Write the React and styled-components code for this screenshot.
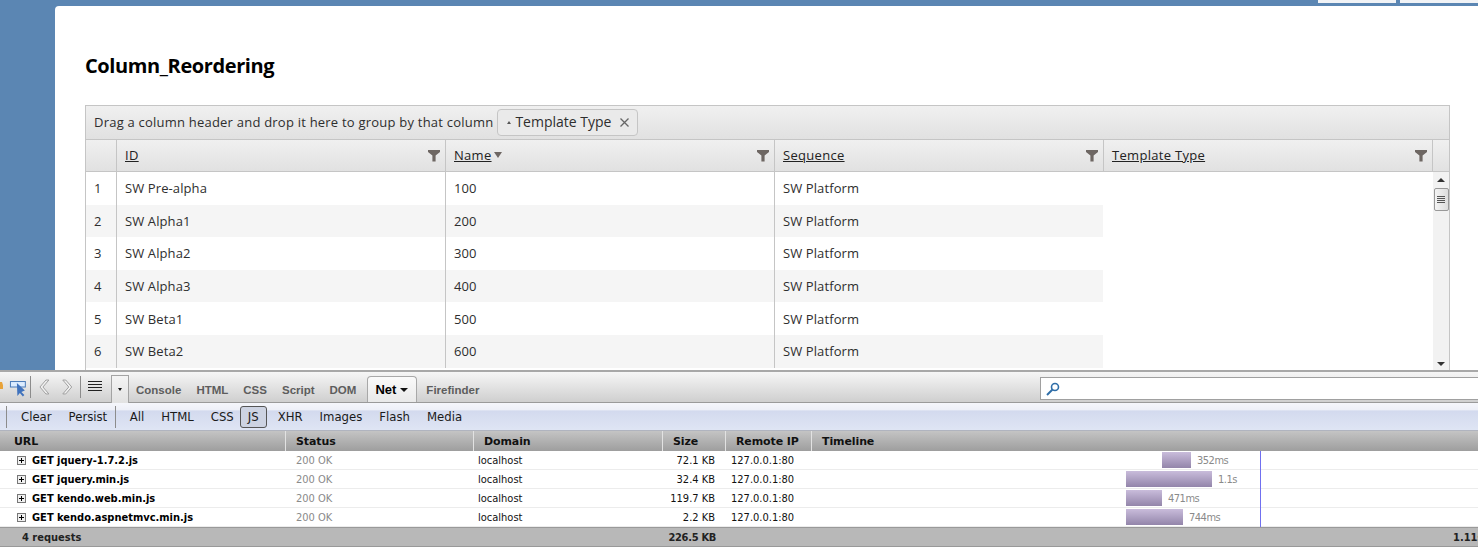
import React from "react";
import styled, { createGlobalStyle } from "styled-components";

const GRID_COLUMNS = "31px 329px 329px 329px 329px 1fr";
const NET_COLUMNS = "286px 188px 189px 63px 86px 1fr";

const requests = [
  { url: "GET jquery-1.7.2.js", size: "72.1 KB", offset: 36, width: 29, time: "352ms" },
  { url: "GET jquery.min.js", size: "32.4 KB", offset: 0, width: 86, time: "1.1s" },
  { url: "GET kendo.web.min.js", size: "119.7 KB", offset: 0, width: 36, time: "471ms" },
  { url: "GET kendo.aspnetmvc.min.js", size: "2.2 KB", offset: 0, width: 57, time: "744ms" },
];

const rows = [
  ["1", "SW Pre-alpha", "100"],
  ["2", "SW Alpha1", "200"],
  ["3", "SW Alpha2", "300"],
  ["4", "SW Alpha3", "400"],
  ["5", "SW Beta1", "500"],
  ["6", "SW Beta2", "600"],
];

const GlobalStyle = createGlobalStyle`
  html, body {
    margin: 0;
    padding: 0;
    background: #fff;
  }
`;

const Page = styled.div`
  width: 1478px;
  height: 558px;
  overflow: hidden;
  display: flex;
  flex-direction: column;
`;

const Site = styled.div`
  height: 370px;
  flex: none;
  display: flex;
  background: #5b86b3;
  position: relative;
`;

const TopTabs = styled.div`
  position: absolute;
  top: 0;
  right: 0;
  display: flex;
  gap: 4px;
`;

const TopTab = styled.div`
  width: 78px;
  height: 3px;
  background: #f1f3f6;
`;

const Content = styled.div`
  margin: 6px 0 0 55px;
  flex: 1;
  min-width: 0;
  background: #fff;
  border-top-left-radius: 4px;
  padding: 0 28px 0 30px;
  overflow: hidden;
`;

const Title = styled.h1`
  margin: 47px 0 26px;
  height: 26px;
  font: bold 20px/26px "Open Sans", sans-serif;
  letter-spacing: -0.4px;
  color: #000;
`;

const Grid = styled.div`
  border: 1px solid #c5c5c5;
  border-bottom: none;
  font: 13px/18px "Open Sans", sans-serif;
  letter-spacing: 0.1px;
  color: #2e2e2e;
`;

const GroupBar = styled.div`
  height: 34px;
  display: flex;
  align-items: center;
  padding: 0 0 1px 8px;
  box-sizing: border-box;
  background: linear-gradient(#f0f0f0, #e1e1e1);
  border-bottom: 1px solid #c5c5c5;
  letter-spacing: 0.22px;
`;

const GroupChip = styled.div`
  height: 25px;
  margin-left: 4px;
  padding: 0 8px 0 7px;
  display: flex;
  align-items: center;
  border: 1px solid #c5c5c5;
  border-radius: 4px;
  background: #eaeaea;
  font-size: 14px;
  letter-spacing: 0;
`;

const ChipCaret = styled.span`
  width: 0;
  height: 0;
  margin: 0 4px 0 2px;
  border-left: 2.5px solid transparent;
  border-right: 2.5px solid transparent;
  border-bottom: 3px solid #555;
`;

const ChipClose = styled.svg`
  margin-left: 9px;
`;

const HeaderRow = styled.div`
  display: grid;
  grid-template-columns: ${GRID_COLUMNS};
  height: 32px;
  box-sizing: border-box;
  background: linear-gradient(#f0f0f0, #e1e1e1);
  border-bottom: 1px solid #c5c5c5;
`;

const HeaderCell = styled.div`
  display: flex;
  align-items: center;
  padding: 0 5px 1px 8px;
  border-right: ${(p) => (p.$last ? "none" : "1px solid #c5c5c5")};
  letter-spacing: 0.3px;
  a {
    color: #222;
    text-decoration: underline;
  }
`;

const SortArrow = styled.span`
  width: 0;
  height: 0;
  margin-left: 2px;
  border: 4px solid transparent;
  border-top: 6px solid #6e6763;
  border-bottom: none;
`;

const FilterIcon = styled.svg`
  margin-left: auto;
  flex: none;
`;

const Body = styled.div`
  position: relative;
  height: 198px;
`;

const Row = styled.div`
  display: grid;
  grid-template-columns: 31px 329px 329px 328px;
  width: 1017px;
  height: 32.6px;
  align-items: stretch;
  background: ${(p) => (p.$alt ? "#f5f5f5" : "#fff")};
`;

const Cell = styled.div`
  display: flex;
  align-items: center;
  padding-left: 8px;
  border-right: ${(p) => (p.$last ? "none" : "1px solid #c5c5c5")};
`;

const ScrollTrack = styled.div`
  position: absolute;
  top: 0;
  right: 0;
  bottom: 0;
  width: 16px;
  box-sizing: border-box;
  padding-bottom: 4px;
  background: #f2f2f2;
  display: flex;
  flex-direction: column;
  align-items: center;
`;

const ScrollUp = styled.span`
  margin-top: 6px;
  width: 0;
  height: 0;
  border-left: 4px solid transparent;
  border-right: 4px solid transparent;
  border-bottom: 4px solid #333;
`;

const ScrollDown = styled.span`
  margin-top: auto;
  width: 0;
  height: 0;
  border-left: 4px solid transparent;
  border-right: 4px solid transparent;
  border-top: 4px solid #333;
`;

const ScrollThumb = styled.div`
  margin-top: 6px;
  width: 13px;
  height: 21px;
  border: 1px solid #999;
  border-radius: 2px;
  background: linear-gradient(90deg, #f4f4f4, #ddd);
  display: flex;
  align-items: center;
  justify-content: center;
`;

const Firebug = styled.div`
  flex: 1;
  display: flex;
  flex-direction: column;
  font-family: "DejaVu Sans", sans-serif;
  border-top: 2px solid #a8a8a8;
  position: relative;
`;

const Toolbar = styled.div`
  height: 30px;
  display: flex;
  align-items: flex-end;
  background: linear-gradient(#f6f6f6, #cfcfcf);
  border-bottom: 1px solid #9a9a9a;
`;

const ToolIcons = styled.div`
  display: flex;
  align-items: center;
  height: 30px;
  width: 128.5px;
  flex: none;
`;

const Divider = styled.span`
  width: 1px;
  height: 22px;
  background: #8c8c8c;
  flex: none;
`;

const NetDivider = styled(Divider)`
  margin-right: 5.5px;
  & ~ & {
    margin-left: -1px;
  }
`;

const ListIcon = styled.svg`
  flex: none;
  margin-left: 7px;
`;

const MenuButton = styled.span`
  width: 16px;
  height: 27px;
  margin: 3px 0 0 9px;
  border: 1px solid #a3a3a3;
  border-bottom: none;
  background: linear-gradient(#f4f4f4, #e2e2e2);
  display: flex;
  align-items: center;
  justify-content: center;
  flex: none;
`;

const Caret = styled.span`
  width: 0;
  height: 0;
  margin-left: ${(p) => (p.$gap ? "4px" : "0")};
  border-left: ${(p) => (p.$big ? 4 : 2.5)}px solid transparent;
  border-right: ${(p) => (p.$big ? 4 : 2.5)}px solid transparent;
  border-top: ${(p) => (p.$big ? 4 : 3)}px solid #111;
`;

const Tab = styled.div`
  height: 26px;
  box-sizing: border-box;
  display: flex;
  align-items: center;
  padding: ${(p) => (p.$active ? "0 8px 0 7px" : "0 6.5px")};
  margin: ${(p) => (p.$active ? "0 1.5px 0 3.5px" : "0")};
  font-family: "Liberation Sans", sans-serif;
  font-size: ${(p) => (p.$active ? 13 : 11.5)}px;
  font-weight: bold;
  color: ${(p) => (p.$active ? "#000" : "#5d5d5d")};
  border: 1px solid ${(p) => (p.$active ? "#a8a8a8" : "transparent")};
  border-bottom: none;
  border-radius: 4px 4px 0 0;
  background: ${(p) => (p.$active ? "linear-gradient(#fafafa, #e9e9e9)" : "none")};
`;

const SearchBox = styled.div`
  position: absolute;
  top: 5px;
  left: 1040px;
  right: -2px;
  height: 21px;
  border: 1px solid #a0a0a0;
  background: #fff;
  display: flex;
  align-items: center;
  padding-left: 5px;
`;

const NetBar = styled.div`
  height: 27px;
  display: flex;
  align-items: center;
  padding-left: 6px;
  font-family: "DejaVu Sans Condensed", "DejaVu Sans", sans-serif;
  font-size: 13px;
  color: #1a1a1a;
  background: linear-gradient(#f5f6fb 0, #eef0f8 24%, #d3daee 30%, #dfe5f4 100%);
  border-bottom: 1px solid #b0b4bf;
`;

const NetButton = styled.span`
  height: 22px;
  box-sizing: border-box;
  display: flex;
  align-items: center;
  padding: 0 ${(p) => (p.$active ? 7 : 6.5)}px;
  margin: ${(p) => (p.$active ? "0 2.5px 0 -2.5px" : "0 1px")};
  border: 1px solid ${(p) => (p.$active ? "#555" : "transparent")};
  border-radius: 3px;
  background: ${(p) => (p.$active ? "#cdd3e2" : "none")};
`;

const NetHead = styled.div`
  display: grid;
  grid-template-columns: ${NET_COLUMNS};
  height: 20px;
  background: linear-gradient(#c4c4c4, #9e9e9e);
`;

const NetHeadCell = styled.div`
  display: flex;
  align-items: center;
  padding-left: ${(p) => p.$pad || 10}px;
  font-size: 11px;
  font-weight: bold;
  letter-spacing: -0.1px;
  color: #111;
  border-right: ${(p) => (p.$last ? "none" : "1px solid #e2e2e2")};
`;

const NetRow = styled.div`
  display: grid;
  grid-template-columns: ${NET_COLUMNS};
  height: 19px;
  box-sizing: border-box;
  align-items: center;
  font-family: "DejaVu Sans Condensed", "DejaVu Sans", sans-serif;
  font-size: 11px;
  color: #111;
  border-bottom: 1px solid #ececec;
`;

const UrlCell = styled.div`
  display: flex;
  align-items: center;
  gap: 6px;
  padding-left: 17px;
  font-weight: bold;
  color: #000;
`;

const Expander = styled.span`
  width: 9px;
  height: 9px;
  box-sizing: border-box;
  border: 1px solid #777;
  background: linear-gradient(to right, transparent 3px, #000 3px, #000 4px, transparent 4px) center / 100% 5px no-repeat,
    linear-gradient(#000, #000) center / 5px 1px no-repeat, #f0f0f0;
`;

const StatusCell = styled.div`
  color: #8a8a8a;
  padding-left: 10px;
`;

const DomainCell = styled.div`
  padding-left: 4px;
`;

const SizeCell = styled.div`
  text-align: right;
  padding-right: 11px;
  margin-left: -30px;
`;

const IpCell = styled.div`
  padding-left: 5px;
`;

const TimeCell = styled.div`
  display: flex;
  align-items: center;
  height: 100%;
  padding-left: 314px;
`;

const Bar = styled.span`
  height: 16px;
  flex: none;
  background: linear-gradient(#c9bcdb, #9385aa);
`;

const BarLabel = styled.span`
  margin-left: 6px;
  letter-spacing: -0.5px;
  color: #8a8a8a;
`;

const RequestList = styled.div`
  position: relative;
`;

const LoadLine = styled.div`
  position: absolute;
  left: 1260px;
  top: 0;
  bottom: 0;
  width: 1px;
  background: #7070f0;
`;

const Summary = styled.div`
  display: grid;
  grid-template-columns: 286px 430px 1fr;
  height: 20px;
  box-sizing: border-box;
  align-items: center;
  background: #b8b8b8;
  border-top: 1px solid #999;
  border-bottom: 1px solid #999;
  font-family: "DejaVu Sans Condensed", "DejaVu Sans", sans-serif;
  font-size: 11px;
  font-weight: bold;
  color: #222;
`;

const SummaryCount = styled.div`
  padding-left: 22px;
`;

const SummarySize = styled.div`
  text-align: right;
  letter-spacing: -0.3px;
`;

const SummaryTime = styled.div`
  padding-left: 737px;
  white-space: nowrap;
`;

const Funnel = () => (
  <FilterIcon width="12" height="13" viewBox="0 0 12 13">
    <path d="M0 1h12v2L7.6 6.5V12.5H4.4V6.5L0 3z" fill="#6e6763" />
  </FilterIcon>
);

const App = () => {
  return (
    <Page>
      <GlobalStyle />
      <Site>
        <TopTabs>
          <TopTab />
          <TopTab />
        </TopTabs>
        <Content>
          <Title>Column_Reordering</Title>
          <Grid>
            <GroupBar>
              Drag a column header and drop it here to group by that column
              <GroupChip>
                <ChipCaret />
                Template Type
                <ChipClose width="9" height="9" viewBox="0 0 9 9">
                  <path d="M.5.5l8 8M8.5.5l-8 8" stroke="#666" strokeWidth="1.3" />
                </ChipClose>
              </GroupChip>
            </GroupBar>
            <HeaderRow>
              <HeaderCell />
              <HeaderCell>
                <a>ID</a>
                <Funnel />
              </HeaderCell>
              <HeaderCell>
                <a>Name</a>
                <SortArrow />
                <Funnel />
              </HeaderCell>
              <HeaderCell>
                <a>Sequence</a>
                <Funnel />
              </HeaderCell>
              <HeaderCell>
                <a>Template Type</a>
                <Funnel />
              </HeaderCell>
              <HeaderCell $last />
            </HeaderRow>
            <Body>
              {rows.map((row, i) => (
                <Row key={row[0]} $alt={i % 2 === 1}>
                  <Cell>{row[0]}</Cell>
                  <Cell>{row[1]}</Cell>
                  <Cell>{row[2]}</Cell>
                  <Cell $last>SW Platform</Cell>
                </Row>
              ))}
              <ScrollTrack>
                <ScrollUp />
                <ScrollThumb>
                  <svg width="8" height="7" viewBox="0 0 8 7">
                    <path d="M0 .5h8M0 2.5h8M0 4.5h8M0 6.5h8" stroke="#555" />
                  </svg>
                </ScrollThumb>
                <ScrollDown />
              </ScrollTrack>
            </Body>
          </Grid>
        </Content>
      </Site>
      <Firebug>
        <Toolbar>
          <ToolIcons>
            <svg width="30" height="30" viewBox="0 0 30 30">
              <path d="M0 10h2l1 3v4H0z" fill="#e8a33a" />
              <rect x="10.5" y="9.5" width="15" height="5.5" fill="#dcecff" stroke="#4a7ab8" />
              <path d="M17 11l.5 13 2.500-3 3 3.500 1.500-1.500-3-3 3.500-1.500z" fill="#3f72bd" />
            </svg>
            <Divider />
            <svg width="49" height="22" viewBox="0 0 49 22">
              <path
                d="M15 4L9 11l6 7h3l-6-7 6-7zM35 4l6 7-6 7h-3l6-7-6-7z"
                fill="#f0f0f0"
                stroke="#a0a0a0"
              />
            </svg>
            <Divider />
            <ListIcon width="14" height="22" viewBox="0 0 14 22">
              <path d="M0 5.5h14M0 8.5h14M0 11.5h14M0 14.5h14" stroke="#222" />
            </ListIcon>
            <MenuButton>
              <Caret />
            </MenuButton>
          </ToolIcons>
          <Tab>Console</Tab>
          <Tab>HTML</Tab>
          <Tab>CSS</Tab>
          <Tab>Script</Tab>
          <Tab>DOM</Tab>
          <Tab $active>
            Net
            <Caret $big $gap />
          </Tab>
          <Tab>Firefinder</Tab>
        </Toolbar>
        <SearchBox>
          <svg width="14" height="14" viewBox="0 0 14 14">
            <circle cx="9" cy="5" r="3.5" fill="none" stroke="#2f6ea8" strokeWidth="1.6" />
            <path d="M6.5 7.5L1 13" stroke="#2f6ea8" strokeWidth="2" />
          </svg>
        </SearchBox>
        <NetBar>
          <NetDivider />
          <NetButton>Clear</NetButton>
          <NetButton>Persist</NetButton>
          <NetDivider />
          <NetButton>All</NetButton>
          <NetButton>HTML</NetButton>
          <NetButton>CSS</NetButton>
          <NetButton $active>JS</NetButton>
          <NetButton>XHR</NetButton>
          <NetButton>Images</NetButton>
          <NetButton>Flash</NetButton>
          <NetButton>Media</NetButton>
        </NetBar>
        <NetHead>
          <NetHeadCell $pad={14}>URL</NetHeadCell>
          <NetHeadCell>Status</NetHeadCell>
          <NetHeadCell>Domain</NetHeadCell>
          <NetHeadCell>Size</NetHeadCell>
          <NetHeadCell>Remote IP</NetHeadCell>
          <NetHeadCell $last>Timeline</NetHeadCell>
        </NetHead>
        <RequestList>
          {requests.map((r) => (
            <NetRow key={r.url}>
              <UrlCell>
                <Expander />
                {r.url}
              </UrlCell>
              <StatusCell>200 OK</StatusCell>
              <DomainCell>localhost</DomainCell>
              <SizeCell>{r.size}</SizeCell>
              <IpCell>127.0.0.1:80</IpCell>
              <TimeCell>
                <Bar style={{ marginLeft: r.offset, width: r.width }} />
                <BarLabel>{r.time}</BarLabel>
              </TimeCell>
            </NetRow>
          ))}
          <LoadLine />
        </RequestList>
        <Summary>
          <SummaryCount>4 requests</SummaryCount>
          <SummarySize>226.5 KB</SummarySize>
          <SummaryTime>1.11s</SummaryTime>
        </Summary>
      </Firebug>
    </Page>
  );
};

export default App;
